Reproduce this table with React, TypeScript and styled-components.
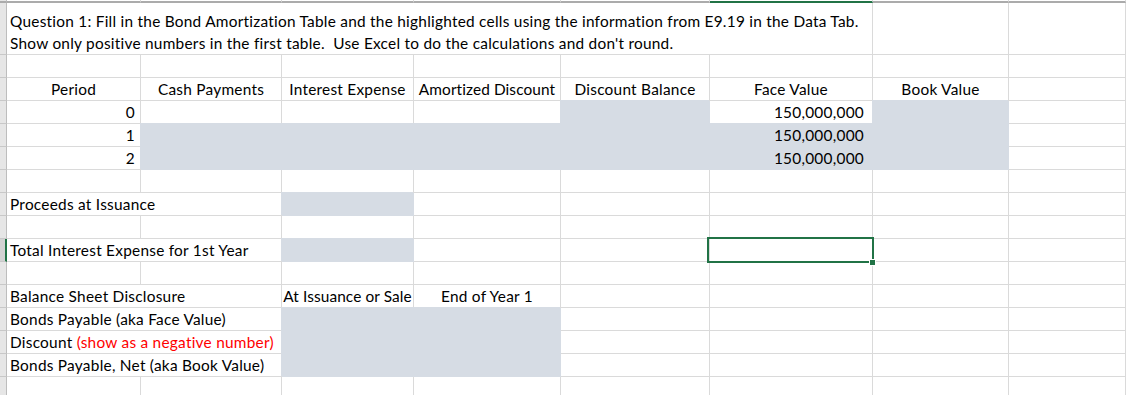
import React from 'react';
import styled, { createGlobalStyle, css } from 'styled-components';

const GRID = '#dadada';
const FILL = '#d6dce4';
const GREEN = '#217346';

const GlobalStyle = createGlobalStyle`
  html, body {
    margin: 0;
    padding: 0;
    background: #ffffff;
    overflow: hidden;
  }
  body {
    font-family: 'Lato', 'Liberation Sans', sans-serif;
    font-size: 15.4px;
    letter-spacing: 0.25px;
    color: #000;
  }
`;

const Sheet = styled.div`
  display: grid;
  grid-template-columns: 7px 134px 141px 132px 147px 149px 163px 136px 1fr;
  grid-template-rows: 3px 52px repeat(15, 23px);
  width: 1126px;
  height: 395px;
  overflow: hidden;
`;

const ColHead = styled.div<{ $active?: boolean }>`
  box-sizing: border-box;
  background: #ffffff;
  border-right: 1px solid ${GRID};
  border-bottom: 2px solid ${({ $active }) => ($active ? GREEN : '#ababab')};
`;

const Corner = styled.div`
  box-sizing: border-box;
  background: #e6e6e6;
  border-right: 1px solid #bdbdbd;
  border-bottom: 2px solid #ababab;
`;

const RowHead = styled.div<{ $active?: boolean }>`
  box-sizing: border-box;
  background: ${({ $active }) => ($active ? '#d3d3d3' : '#e6e6e6')};
  border-bottom: 1px solid #c8c8c8;
  border-right: ${({ $active }) => ($active ? `2px solid ${GREEN}` : '1px solid #bdbdbd')};
`;

type Align = 'left' | 'center' | 'right';

const Cell = styled.div<{
  $fill?: boolean;
  $align?: Align;
  $span?: number;
  $pad?: number;
  $tight?: boolean;
}>`
  box-sizing: border-box;
  grid-column: span ${({ $span }) => $span ?? 1};
  background: ${({ $fill }) => ($fill ? FILL : '#ffffff')};
  border-right: 1px solid ${({ $fill }) => ($fill ? FILL : GRID)};
  border-bottom: 1px solid ${({ $fill }) => ($fill ? FILL : GRID)};
  text-align: ${({ $align }) => $align ?? 'left'};
  padding: 0 ${({ $pad }) => $pad ?? 3}px 0 3px;
  line-height: 22px;
  white-space: nowrap;
  overflow: visible;
  ${({ $fill }) =>
    $fill &&
    css`
      box-shadow: -1px -1px 0 ${FILL};
    `}
  ${({ $tight }) =>
    $tight &&
    css`
      padding: 0;
      letter-spacing: 0.1px;
    `}
`;

const TitleCell = styled(Cell)`
  padding-top: 7px;
  white-space: normal;
`;

const Selected = styled(Cell)`
  position: relative;

  &::after {
    content: '';
    position: absolute;
    left: -3px;
    top: -2px;
    right: -2px;
    bottom: -2px;
    border: 2px solid ${GREEN};
  }
`;

const Handle = styled.span`
  position: absolute;
  right: -3px;
  bottom: -4px;
  width: 5px;
  height: 5px;
  background: ${GREEN};
  box-shadow: 0 0 0 1px #ffffff;
  z-index: 1;
`;

const Red = styled.span`
  color: #ff0000;
`;

type CellDef = {
  text?: React.ReactNode;
  span?: number;
  fill?: boolean;
  align?: Align;
  pad?: number;
  tight?: boolean;
  selected?: boolean;
};

const empty = (n: number): CellDef[] => Array.from({ length: n }, () => ({}));
const face = '150,000,000';

// rows below the title row, columns A..H
const rows: CellDef[][] = [
  empty(8),
  [
    { text: 'Period', align: 'center' },
    { text: 'Cash Payments', align: 'center' },
    { text: 'Interest Expense', align: 'center' },
    { text: 'Amortized Discount', align: 'center', tight: true },
    { text: 'Discount Balance', align: 'center' },
    { text: 'Face Value', align: 'center' },
    { text: 'Book Value', align: 'center' },
    {},
  ],
  [
    { text: '0', align: 'right', pad: 5 },
    {},
    {},
    {},
    { fill: true },
    { text: face, align: 'right', pad: 8 },
    { fill: true },
    {},
  ],
  [
    { text: '1', align: 'right', pad: 5 },
    { fill: true },
    { fill: true },
    { fill: true },
    { fill: true },
    { text: face, align: 'right', pad: 8, fill: true },
    { fill: true },
    {},
  ],
  [
    { text: '2', align: 'right', pad: 5 },
    { fill: true },
    { fill: true },
    { fill: true },
    { fill: true },
    { text: face, align: 'right', pad: 8, fill: true },
    { fill: true },
    {},
  ],
  empty(8),
  [{ text: 'Proceeds at Issuance', span: 2 }, { fill: true }, ...empty(5)],
  empty(8),
  [
    { text: 'Total Interest Expense for 1st Year', span: 2 },
    { fill: true },
    {},
    {},
    { selected: true },
    {},
    {},
  ],
  empty(8),
  [
    { text: 'Balance Sheet Disclosure', span: 2 },
    { text: 'At Issuance or Sale', align: 'center', tight: true },
    { text: 'End of Year 1', align: 'center' },
    ...empty(4),
  ],
  [{ text: 'Bonds Payable (aka Face Value)', span: 2 }, { fill: true }, { fill: true }, ...empty(4)],
  [
    {
      text: (
        <>
          Discount <Red>(show as a negative number)</Red>
        </>
      ),
      span: 2,
    },
    { fill: true },
    { fill: true },
    ...empty(4),
  ],
  [{ text: 'Bonds Payable, Net (aka Book Value)', span: 2 }, { fill: true }, { fill: true }, ...empty(4)],
  empty(8),
];

const App: React.FC = () => {
  return (
    <>
      <GlobalStyle />
      <Sheet>
        <Corner />
        {Array.from({ length: 8 }, (_, i) => (
          <ColHead key={`h${i}`} $active={i === 5} />
        ))}

        <RowHead />
        <TitleCell $span={6}>
          Question 1: Fill in the Bond Amortization Table and the highlighted cells using the
          information from E9.19 in the Data Tab.
          <br />
          Show only positive numbers in the first table.&nbsp; Use Excel to do the calculations and
          don't round.
        </TitleCell>
        <Cell />
        <Cell />

        {rows.map((row, r) => (
          <React.Fragment key={r}>
            <RowHead $active={r === 8} />
            {row.map((c, i) =>
              c.selected ? (
                <Selected key={i}>
                  <Handle />
                </Selected>
              ) : (
                <Cell
                  key={i}
                  $span={c.span}
                  $fill={c.fill}
                  $align={c.align}
                  $pad={c.pad}
                  $tight={c.tight}
                >
                  {c.text}
                </Cell>
              )
            )}
          </React.Fragment>
        ))}
      </Sheet>
    </>
  );
};

export default App;
